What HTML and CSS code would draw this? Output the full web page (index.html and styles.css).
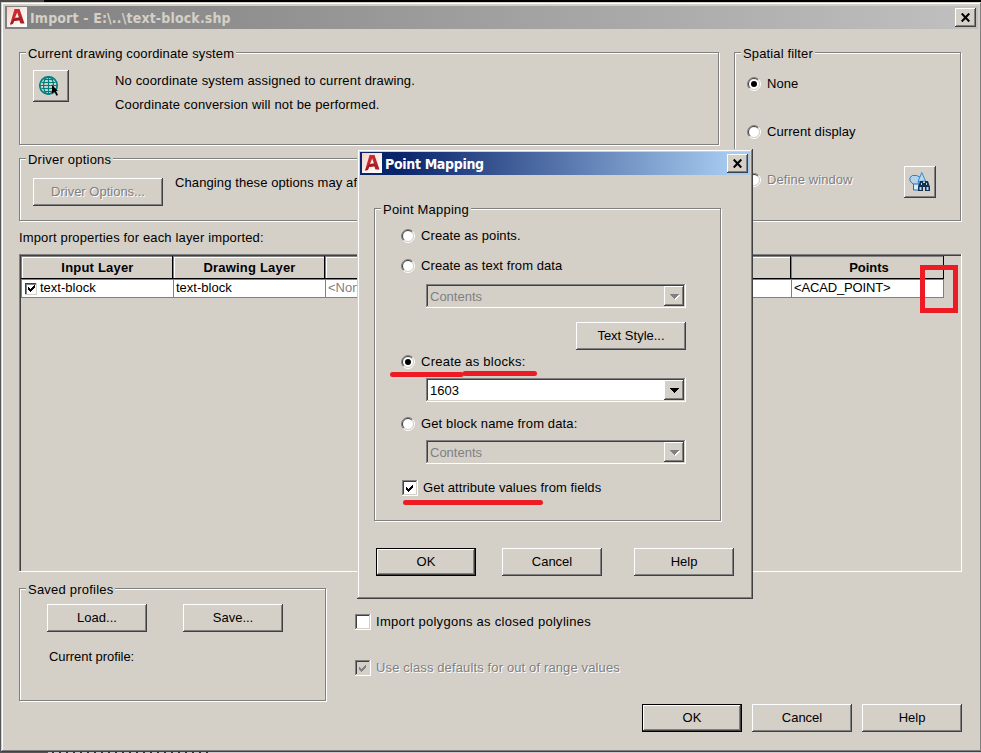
FILE: index.html
```html
<!DOCTYPE html>
<html lang="en">
<head>
<meta charset="utf-8">
<title>Import</title>
<link rel="stylesheet" href="styles.css">
</head>
<body>
<svg class="defs" width="0" height="0" aria-hidden="true">
  <defs>
    <linearGradient id="logoBg" x1="0" y1="0" x2="1" y2="1"><stop offset="0" stop-color="#f3cfc4"/><stop offset=".55" stop-color="#faf0ec"/><stop offset="1" stop-color="#fff"/></linearGradient>
    <linearGradient id="logoRed" x1="0" y1="0" x2="1" y2="1"><stop offset="0" stop-color="#dc3238"/><stop offset="1" stop-color="#a01c22"/></linearGradient>
  </defs>
  <symbol id="logo" viewBox="0 0 20 20">
    <path fill="url(#logoBg)" d="M0 0h20v20H0z"/>
    <path fill="url(#logoRed)" fill-rule="evenodd" d="M7.500 2h5L17.500 16.500h-4l-1.300-3.400-5 .6L5.800 17 3 17.500zM10.200 5.500 8 10.800l4-.4z"/>
    <path fill="#a01b22" d="m3 17.500 3.500-5.500 6-1.600 1 2.800-6.400.8L5.800 17z"/>
  </symbol>
  <symbol id="cross" viewBox="0 0 9 9"><path fill="none" stroke="#000" stroke-width="2.100" d="M.7.500l7.600 8M8.300.500l-7.600 8"/></symbol>
  <symbol id="arrow" viewBox="0 0 9 5"><path d="M0 0h9v1h-1v1h-1v1h-1v1h-1v1h-1v-1h-1v-1h-1v-1h-1v-1h-1z"/></symbol>
  <symbol id="tick" viewBox="0 0 9 9"><path d="M1 3h1v1h1v1h1v-1h1v-1h1v-1h1v-1h1v3h-1v1h-1v1h-1v1h-1v1h-1v-1h-1v-1h-1z"/></symbol>
  <symbol id="radio" viewBox="0 0 14 14">
    <circle class="dial" cx="7" cy="7" r="5.500"/>
    <path fill="none" stroke="#808080" d="M2.400 11.600A6.500 6.500 0 0 1 11.600 2.400"/>
    <path fill="none" stroke="#fff" d="M11.600 2.400A6.500 6.500 0 0 1 2.400 11.600"/>
    <path fill="none" stroke="#404040" d="M3.100 10.900A5.500 5.500 0 0 1 10.900 3.100"/>
    <path fill="none" stroke="#d4d0c8" d="M10.900 3.100A5.500 5.500 0 0 1 3.100 10.900"/>
  </symbol>
</svg>

<main class="window main">
  <header class="titlebar inactive">
    <svg class="logo"><use href="#logo"/></svg>
    <h1>Import - E:\..\text-block.shp</h1>
    <button class="close"><svg width="9" height="9"><use href="#cross"/></svg></button>
  </header>

  <div class="top">
    <div class="left">
      <section class="group coord">
        <h2>Current drawing coordinate system</h2>
        <div class="coord-row">
          <button class="btn globe">
            <svg width="20" height="20" viewBox="0 0 20 20">
              <g fill="none" stroke="#008080" stroke-width="1.200">
                <circle cx="9.500" cy="9.500" r="8.700" stroke-width="1.700"/>
                <ellipse cx="9.500" cy="9.500" rx="5" ry="8.700"/>
                <path d="M9.500 1v17M1 9.500h17M2.500 6.500h14M2.500 12.500h14M5 3.500h9M5 15.500h9"/>
              </g>
              <path d="M13 9l6 6h-2l2 4-1.600.8-2-4L13 17.500z"/>
            </svg>
          </button>
          <div class="coord-text"><p>No coordinate system assigned to current drawing.</p><p>Coordinate conversion will not be performed.</p></div>
        </div>
      </section>
      <section class="group driver">
        <h2>Driver options</h2>
        <div class="driver-row">
          <button class="btn wide disabled">Driver Options...</button>
          <p>Changing these options may af</p>
        </div>
      </section>
    </div>
    <section class="group spatial">
      <h2>Spatial filter</h2>
      <label class="option"><svg class="radio"><use href="#radio"/><circle cx="7" cy="7" r="3"/></svg>None</label>
      <label class="option"><svg class="radio"><use href="#radio"/></svg>Current display</label>
      <div class="define">
        <label class="option disabled"><svg class="radio"><use href="#radio"/></svg>Define window</label>
        <button class="btn pick">
          <svg width="21" height="21" viewBox="0 0 21 21">
            <path fill="#b4d3ea" stroke="#2a7cc6" d="M4.500 13H4L1 10V6.500L3.500 4.500h4L11 6l-2 6.500"/>
            <path fill="#dcebf5" stroke="#1b6fc0" d="M4.500 13v6H10v-6z"/>
            <path fill="#b9d8ee" stroke="#3a8ad0" d="M9 10.500l3.800-9L16.500 10z"/>
            <path fill="#12304f" d="M11 10h3v2h2v-2h3l2 6v4h-5v-4h-2v4H9v-4z"/>
            <path fill="#b9d8ee" d="M10.500 16h2v3h-2zM17.500 16h2v3h-2zM12 12h1v2h-1zM17 12h1v2h-1z"/>
          </svg>
        </button>
      </div>
    </section>
  </div>

  <p class="caption">Import properties for each layer imported:</p>
  <div class="list">
    <div class="grid">
      <div class="head">Input Layer</div><div class="head">Drawing Layer</div><div class="head"></div><div class="head"></div><div class="head"></div><div class="head points">Points</div>
      <div class="cell"><span class="check small"><svg width="9" height="9"><use href="#tick"/></svg></span>text-block</div><div class="cell">text-block</div><div class="cell gray">&lt;Non</div><div class="cell"></div><div class="cell"></div><div class="cell acad">&lt;ACAD_POINT&gt;</div>
    </div>
  </div>

  <div class="bottom">
    <section class="group profiles">
      <h2>Saved profiles</h2>
      <div class="pair"><button class="btn">Load...</button><button class="btn">Save...</button></div>
      <p>Current profile:</p>
    </section>
    <div class="flags">
      <label class="flag polygons"><span class="check"></span>Import polygons as closed polylines</label>
      <label class="flag disabled"><span class="check"><svg width="9" height="9"><use href="#tick"/></svg></span><span class="range">Use class defaults for out of range values</span></label>
    </div>
  </div>
  <footer class="actions"><button class="btn default">OK</button><button class="btn">Cancel</button><button class="btn">Help</button></footer>
</main>

<aside class="window dialog">
  <header class="titlebar active">
    <svg class="logo"><use href="#logo"/></svg>
    <h1>Point Mapping</h1>
    <button class="close"><svg width="9" height="9"><use href="#cross"/></svg></button>
  </header>
  <section class="group mapping">
    <h2>Point Mapping</h2>
    <label class="option"><svg class="radio"><use href="#radio"/></svg>Create as points.</label>
    <label class="option"><svg class="radio"><use href="#radio"/></svg>Create as text from data</label>
    <div class="combo off"><span>Contents</span><i class="drop"><svg width="9" height="5"><use href="#arrow"/></svg></i></div>
    <button class="btn style">Text Style...</button>
    <label class="option blocks"><svg class="radio"><use href="#radio"/><circle cx="7" cy="7" r="3"/></svg>Create as blocks:</label>
    <div class="combo on"><span>1603</span><i class="drop"><svg width="9" height="5"><use href="#arrow"/></svg></i></div>
    <label class="option named"><svg class="radio"><use href="#radio"/></svg>Get block name from data:</label>
    <div class="combo off"><span>Contents</span><i class="drop"><svg width="9" height="5"><use href="#arrow"/></svg></i></div>
    <label class="flag"><span class="check"><svg width="9" height="9"><use href="#tick"/></svg></span>Get attribute values from fields</label>
  </section>
  <footer class="choices"><button class="btn default">OK</button><button class="btn">Cancel</button><button class="btn">Help</button></footer>
</aside>

<svg class="marks" width="981" height="753" fill="none" stroke="#ed1c24" stroke-width="5" stroke-linecap="round">
  <path d="M392.500 374.500H461M465 373.500h69.500M405.500 502.500h135"/>
  <path stroke-linecap="butt" d="M922.500 267.500h33v43h-33z"/>
</svg>
</body>
</html>
```
FILE: styles.css
```css
* { box-sizing: border-box; }
body {
  margin: 0; width: 981px; height: 753px; overflow: hidden; position: relative;
  padding: 2px 0 0 1px;
  background: linear-gradient(90deg, #4a4a4a 44px, transparent 44px) 0 0 / 100% 2px no-repeat,
              linear-gradient(#565656, #565656) 0 0 / 1px 753px no-repeat,
              linear-gradient(90deg, #565656 48px, transparent 48px) 0 752px / 100% 1px no-repeat,
              repeating-linear-gradient(90deg, #333 0 2px, #c8c8d0 2px 7px) 52px 752px / 158px 1px no-repeat,
              linear-gradient(#c8c8d0, #c8c8d0) 0 752px / 100% 1px no-repeat, #000;
  font: 13px/16px "Liberation Sans", Arial, sans-serif; color: #000;
}
h1, h2, p { margin: 0; font-size: inherit; font-weight: normal; white-space: nowrap; }
button { font: inherit; color: inherit; padding: 0; border: 0; background: none; }
svg { display: block; flex: none; }
.defs, .marks { position: absolute; }
.marks { left: 0; top: 0; pointer-events: none; }

.window {
  background: #d4d0c8;
  box-shadow: inset -1px -1px #404040, inset 1px 1px #d4d0c8, inset -2px -2px #808080, inset 2px 2px #fff;
}
.main { width: 981px; height: 750px; padding: 4px; }
.dialog { position: absolute; left: 357px; top: 149px; width: 396px; height: 450px; padding: 3px; }

.titlebar { display: flex; align-items: center; height: 23px; padding: 0 2px; }
.titlebar h1 { flex: 1; margin-left: 3px; font: bold 14px/20px "DejaVu Sans Condensed", "DejaVu Sans", sans-serif; font-stretch: condensed; }
.inactive { background: linear-gradient(90deg, #808080, #c0c0c0); color: #d4d0c8; }
.inactive h1 { letter-spacing: .16px; }
.active { background: linear-gradient(90deg, #0a246a 10%, #a6caf0 95%); color: #fff; }
.active h1 { letter-spacing: -.32px; }
.logo { width: 20px; height: 20px; margin-top: -1px; }
.close, .drop {
  display: flex; align-items: center; justify-content: center; background: #d4d0c8;
  box-shadow: inset -1px -1px #404040, inset 1px 1px #fff, inset -2px -2px #808080;
}
.close { width: 21px; height: 19px; }

.btn {
  width: 100px; height: 28px; flex: none; display: flex; align-items: center; justify-content: center; padding-bottom: 1px;
  background: #d4d0c8; box-shadow: inset -1px -1px #404040, inset 1px 1px #fff, inset -2px -2px #808080;
}
.btn.default { border: 1px solid #000; }
.disabled { color: #808080; text-shadow: 1px 1px #fff; }

.group { border: 1px solid #808080; box-shadow: inset 1px 1px #fff, 1px 1px #fff; display: flex; flex-direction: column; align-items: flex-start; }
.group h2 { height: 16px; line-height: 18px; margin: -8px 0 0 6px; padding: 0 2px; background: #d4d0c8; flex: none; letter-spacing: .14px; }

.top { display: flex; gap: 15px; margin: 23px 0 0 14px; }
.left { width: 700px; }
.coord { height: 93px; }
.coord-row { display: flex; margin: 9px 0 0 13px; }
.globe { width: 36px; height: 32px; padding: 0 4px 0 0; }
.coord-text { margin: 3px 0 0 46px; letter-spacing: .15px; }
.coord-text p + p { margin-top: 8px; }
.driver { height: 63px; margin-top: 13px; }
.driver h2, .profiles h2, .mapping h2 { letter-spacing: .22px; }
.driver-row { display: flex; gap: 12px; margin: 11px 0 0 13px; }
.driver-row p { margin-top: -3px; letter-spacing: .1px; }
.wide { width: 130px; }
.spatial { width: 227px; height: 169px; }
.option { display: flex; align-items: center; gap: 6px; height: 16px; white-space: nowrap; letter-spacing: .08px; }
.radio { width: 14px; height: 14px; fill: #000; }
.dial { fill: #fff; }
.disabled .dial { fill: #d4d0c8; }
.spatial .option { margin-left: 12px; }
.spatial h2 + .option { margin-top: 15px; }
.spatial .option + .option { margin-top: 32px; }
.define { display: flex; margin-top: 26px; align-items: flex-start; }
.define .option { width: 142px; margin-top: 6px; }
.pick { width: 32px; height: 32px; margin-left: 15px; padding: 0 1px 1px 0; }

.caption { margin: 9px 0 0 14px; letter-spacing: .15px; }
.list {
  width: 943px; height: 318px; margin: 8px 0 0 14px; padding: 2px;
  box-shadow: inset -1px -1px #fff, inset 1px 1px #808080, inset 2px 2px #404040;
}
.grid { display: grid; grid-template-columns: 152px 152px 152px 162px 152px 153px; grid-template-rows: 23px 19px; }
.head {
  border-right: 1px solid #000; border-bottom: 1px solid #000; font-weight: bold; font-size: 13px; text-align: center; line-height: 23px;
  letter-spacing: .2px; padding-left: 2px;
  box-shadow: inset 0 1px #808080, inset 1px 0 #808080, inset 2px 2px #fff;
}
.points { padding-left: 4px; letter-spacing: 0; box-shadow: inset 1px 1px #808080; }
.cell { display: flex; align-items: center; background: #fff; padding: 0 0 1px 3px; border-top: 1px solid #808080; border-bottom: 1px solid #808080; box-shadow: inset 1px 0 #808080; }
.cell:last-child { border-right: 1px solid #808080; }
.gray { color: #808080; }
.acad { letter-spacing: -.15px; }

.check { width: 16px; height: 16px; flex: none; display: flex; align-items: center; justify-content: center; background: #fff;
  box-shadow: inset -1px -1px #fff, inset 1px 1px #808080, inset -2px -2px #d4d0c8, inset 2px 2px #404040; }
.check svg { margin-left: -1px; }
.small { width: 12px; height: 12px; margin: 1px 3px 0 1px; box-shadow: inset -1px -1px #d4d0c8, inset 1px 1px #404040, inset 2px 2px #808080; }
.small svg { margin-left: 0; }
.flag { display: flex; align-items: center; gap: 5px; height: 16px; white-space: nowrap; letter-spacing: .06px; }
.flag.disabled .check { background: #d4d0c8; fill: #808080; }
.polygons { letter-spacing: .28px; }
.range { letter-spacing: .13px; }

.bottom { display: flex; margin: 16px 0 0 14px; }
.profiles { width: 307px; height: 113px; }
.pair { display: flex; gap: 36px; margin: 7px 0 0 27px; }
.profiles p { margin: 17px 0 0 29px; letter-spacing: -.05px; }
.flags { margin: 26px 0 0 29px; }
.flags .flag + .flag { margin-top: 30px; }
.actions { display: flex; gap: 10px; margin: 3px 0 0 637px; }

.mapping { width: 347px; height: 313px; margin: 33px 0 0 14px; }
.mapping .option { margin-left: 26px; }
.mapping h2 + .option { margin-top: 11px; }
.mapping .option + .option { margin-top: 14px; }
.mapping .blocks { letter-spacing: .24px; }
.mapping .named { letter-spacing: .13px; }
.combo { width: 260px; height: 24px; display: flex; padding: 2px; margin: 10px 0 0 51px;
  box-shadow: inset -1px -1px #fff, inset 1px 1px #808080, inset -2px -2px #d4d0c8, inset 2px 2px #404040; }
.combo span { flex: 1; padding-left: 2px; line-height: 21px; }
.on { background: #fff; margin-top: 8px; }
.off { color: #808080; }
.off .drop { fill: #808080; }
.off .drop svg { filter: drop-shadow(1px 1px 0 #fff); }
.drop { width: 20px; height: 20px; }
.style { width: 110px; margin: 14px 0 0 201px; }
.style + .option { margin-top: 4px; }
.on + .option { margin-top: 14px; }
.on + .option + .combo { margin-top: 8px; }
.mapping .flag { margin: 16px 0 0 27px; }
.choices { display: flex; margin: 27px 0 0 16px; }
.choices .btn + .btn { margin-left: 26px; }
.choices .btn:last-child { margin-left: 32px; }
```
